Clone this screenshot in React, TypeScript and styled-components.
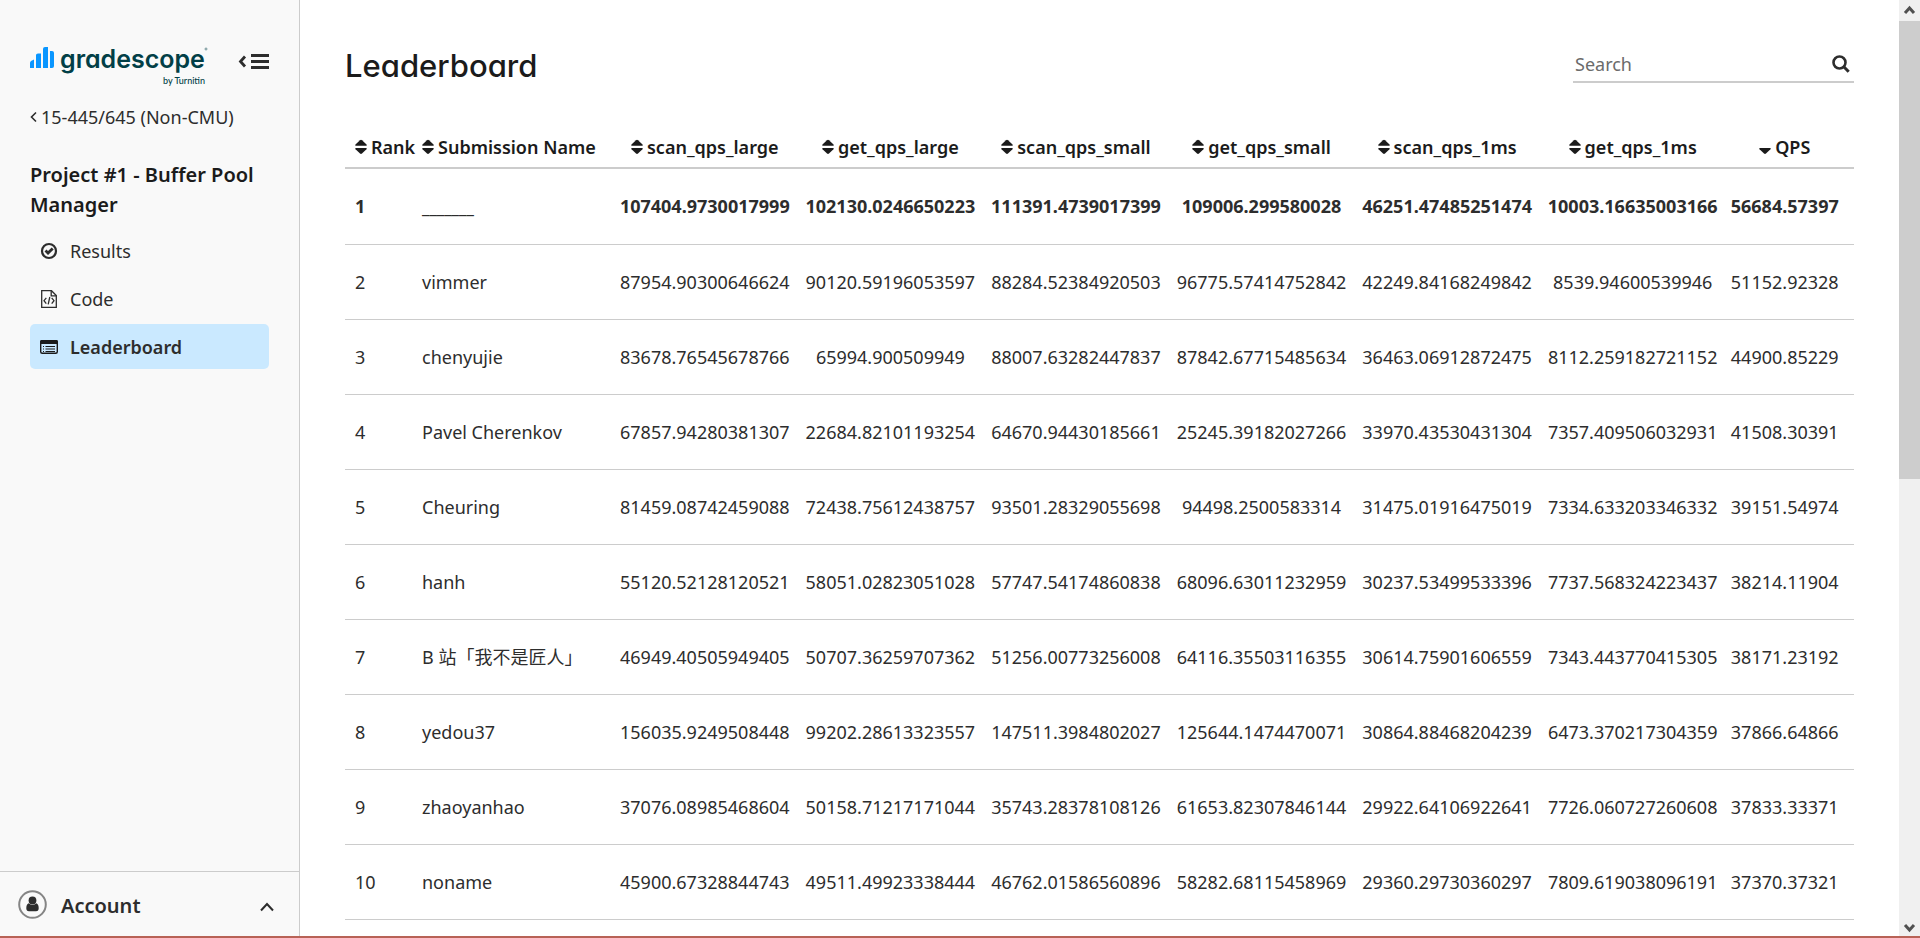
import React from 'react';
import styled, { createGlobalStyle, css } from 'styled-components';

const GlobalStyle = createGlobalStyle`
  *, *::before, *::after { box-sizing: border-box; }
  body {
    margin: 0;
    background: #fff;
    color: #2d2d2d;
    font-family: 'Noto Sans', 'Noto Sans CJK SC', sans-serif;
    font-size: 18px;
    line-height: 30px;
  }
  a { color: inherit; text-decoration: none; }
  button { font: inherit; color: inherit; background: none; border: 0; padding: 0; cursor: pointer; }
  svg { flex-shrink: 0; }
`;

const Window = styled.div`
  display: flex;
  flex-direction: column;
  height: 100vh;
  overflow: hidden;
  border-bottom: 2px solid #b86256;
`;

const Shell = styled.div`
  flex: 1;
  min-height: 0;
  display: grid;
  grid-template-columns: 300px minmax(0, 1fr) 21px;
`;

const Sidebar = styled.aside`
  display: flex;
  flex-direction: column;
  min-height: 0;
  background: #f9f9f9;
  border-right: 1px solid #ccc;
`;

const SidebarBody = styled.div`
  flex: 1;
  padding: 46px 30px 0;
`;

const Brand = styled.div`
  display: flex;
  justify-content: space-between;
  align-items: flex-start;
  height: 56px;
`;

const BrandLogo = styled.svg`
  display: block;
  width: 190px;
  height: 42px;
  overflow: visible;
`;

const CollapseButton = styled.button`
  display: flex;
  margin-top: 6px;
`;

const CourseLink = styled.a`
  display: flex;
  align-items: center;
  gap: 4px;
`;

const AssignmentTitle = styled.h2`
  margin: 28px 0 8px;
  color: #1b1b1b;
  font-size: 20px;
  font-weight: 600;
`;

const NavList = styled.ul`
  list-style: none;
  margin: 0;
  padding: 0;
  display: grid;
  gap: 3px;
`;

const NavLink = styled.a<{ $active?: boolean }>`
  display: flex;
  align-items: center;
  gap: 11px;
  height: 45px;
  padding-left: 9px;
  border-radius: 5px;
  ${(p) => p.$active && css`
    background: #cae9ff;
    font-weight: 600;
  `}
`;

const AccountButton = styled.button`
  display: flex;
  align-items: center;
  gap: 14px;
  height: 65px;
  padding: 0 25px 0 18px;
  border-top: 1px solid #ccc;
  font-size: 20px;
  font-weight: 600;
  text-align: left;
`;

const AccountLabel = styled.span`
  flex: 1;
  padding-top: 4px;
`;

const AccountChevron = styled.svg`
  margin-top: 6px;
`;

const Main = styled.main`
  min-width: 0;
  overflow: hidden;
  padding: 45px 45px 0;
`;

const PageHeader = styled.header`
  display: flex;
  justify-content: space-between;
  align-items: flex-start;
`;

const PageTitle = styled.h1`
  margin: 0;
  color: #1b1b1b;
  font-family: Inter, sans-serif;
  font-feature-settings: 'cv11';
  font-size: 31px;
  font-weight: 500;
  line-height: 42px;
`;

const SearchBox = styled.form`
  display: flex;
  align-items: center;
  width: 281px;
  height: 38px;
  padding: 2px 4px 0 0;
  border-bottom: 2px solid #ccc;
`;

const SearchInput = styled.input`
  flex: 1;
  min-width: 0;
  padding: 0 2px;
  border: 0;
  outline: 0;
  background: none;
  font: inherit;
  color: inherit;
  &::placeholder { color: #6b6b6b; opacity: 1; }
`;

const Board = styled.table`
  width: 100%;
  margin-top: 40px;
  border-collapse: collapse;
  table-layout: fixed;
`;

const HeadCell = styled.th<{ $left?: boolean }>`
  height: 41px;
  padding: 0 0 0 ${(p) => (p.$left ? 10 : 0)}px;
  border-bottom: 2px solid #ccc;
  color: #1b1b1b;
  font-weight: 600;
  white-space: nowrap;
  &:last-child { padding-right: 10px; }
`;

const SortButton = styled.button<{ $left?: boolean }>`
  display: flex;
  align-items: center;
  justify-content: ${(p) => (p.$left ? 'flex-start' : 'center')};
  gap: 4px;
  width: 100%;
`;

const Row = styled.tr<{ $leader?: boolean }>`
  height: ${(p) => (p.$leader ? 76 : 75)}px;
  font-weight: ${(p) => (p.$leader ? 700 : 400)};
`;

const Cell = styled.td<{ $left?: boolean }>`
  padding: 0 0 0 ${(p) => (p.$left ? 10 : 0)}px;
  border-bottom: 1px solid #ccc;
  text-align: ${(p) => (p.$left ? 'left' : 'center')};
  white-space: nowrap;
  &:last-child { padding-right: 10px; }
`;

const ScrollTrack = styled.div`
  display: flex;
  flex-direction: column;
  align-items: stretch;
  background: #f0f0f0;
`;

const ScrollArrow = styled.svg`
  display: block;
  width: 21px;
  height: 21px;
`;

const ScrollRail = styled.div`
  flex: 1;
`;

const ScrollThumb = styled.div`
  height: 51.2%;
  background: #cdcdcd;
`;

const columns = [
  { label: 'Rank', width: '67px' },
  { label: 'Submission Name', width: '200px' },
  { label: 'scan_qps_large', width: '13%' },
  { label: 'get_qps_large', width: '13%' },
  { label: 'scan_qps_small', width: '13%' },
  { label: 'get_qps_small', width: '13%' },
  { label: 'scan_qps_1ms', width: '13%' },
  { label: 'get_qps_1ms', width: '13%' },
  { label: 'QPS', width: '9%' },
];

const rows = [
  ['1', '_______', '107404.9730017999', '102130.0246650223', '111391.4739017399', '109006.299580028', '46251.47485251474', '10003.16635003166', '56684.57397'],
  ['2', 'vimmer', '87954.90300646624', '90120.59196053597', '88284.52384920503', '96775.57414752842', '42249.84168249842', '8539.94600539946', '51152.92328'],
  ['3', 'chenyujie', '83678.76545678766', '65994.900509949', '88007.63282447837', '87842.67715485634', '36463.06912872475', '8112.259182721152', '44900.85229'],
  ['4', 'Pavel Cherenkov', '67857.94280381307', '22684.82101193254', '64670.94430185661', '25245.39182027266', '33970.43530431304', '7357.409506032931', '41508.30391'],
  ['5', 'Cheuring', '81459.08742459088', '72438.75612438757', '93501.28329055698', '94498.2500583314', '31475.01916475019', '7334.633203346332', '39151.54974'],
  ['6', 'hanh', '55120.52128120521', '58051.02823051028', '57747.54174860838', '68096.63011232959', '30237.53499533396', '7737.568324223437', '38214.11904'],
  ['7', 'B 站「我不是匠人」', '46949.40505949405', '50707.36259707362', '51256.00773256008', '64116.35503116355', '30614.75901606559', '7343.443770415305', '38171.23192'],
  ['8', 'yedou37', '156035.9249508448', '99202.28613323557', '147511.3984802027', '125644.1474470071', '30864.88468204239', '6473.370217304359', '37866.64866'],
  ['9', 'zhaoyanhao', '37076.08985468604', '50158.71217171044', '35743.28378108126', '61653.82307846144', '29922.64106922641', '7726.060727260608', '37833.33371'],
  ['10', 'noname', '45900.67328844743', '49511.49923338444', '46762.01586560896', '58282.68115458969', '29360.29730360297', '7809.619038096191', '37370.37321'],
];

const LogoText = styled.text`
  font-family: Inter, sans-serif;
  font-feature-settings: 'cv11';
  font-size: 25px;
  font-weight: 600;
`;

const LogoByline = styled.text`
  font-family: Lato, sans-serif;
  font-size: 9px;
  font-weight: 500;
`;

const GradescopeLogo = () => (
  <BrandLogo viewBox="0 0 190 42" role="img" aria-label="Gradescope by Turnitin">
    <g fill="#0a96ff">
      <path d="M0 22V17Q0 16 1 15L4 13.500V22Z" />
      <path d="M6 22V9Q6 7.500 8 7.500H11V22Z" />
      <path d="M13 22V3Q13 1 15 1H18V22Z" />
      <path d="M20 5H22Q24 5 24 7V20Q24 22 22 22H20Z" />
    </g>
    <g fill="#023f47">
      <LogoText x="30" y="22">gradescope</LogoText>
      <LogoByline x="133" y="38">by Turnitin</LogoByline>
    </g>
    <circle cx="176" cy="3" r="1" fill="none" stroke="#6d9095" />
  </BrandLogo>
);

const CollapseIcon = () => (
  <svg width="31" height="18" viewBox="0 0 31 18" aria-hidden="true">
    <path d="M7 4.500L2.500 9.500L7 14.500" fill="none" stroke="#2d2d2d" strokeWidth="2.800" />
    <path d="M13 3.500H31M13 9.500H31M13 15.500H31" stroke="#2d2d2d" strokeWidth="3" />
  </svg>
);

const BackIcon = () => (
  <svg width="7" height="12" viewBox="0 0 7 12" aria-hidden="true">
    <path d="M6 1.500L1.500 6L6 10.500" fill="none" stroke="#2d2d2d" strokeWidth="1.600" />
  </svg>
);

const ResultsIcon = () => (
  <svg width="20" height="20" viewBox="0 0 20 20" aria-hidden="true">
    <circle cx="10" cy="10" r="7" fill="none" stroke="#2d2d2d" strokeWidth="2.200" />
    <path d="M6.500 9.600L9 12.100L13.700 7.400" fill="none" stroke="#2d2d2d" strokeWidth="2.800" />
  </svg>
);

const CodeIcon = () => (
  <svg width="20" height="20" viewBox="0 0 20 20" fill="none" stroke="#2d2d2d" strokeWidth="1.300" aria-hidden="true">
    <path d="M2.700 1.700H12.500L17.300 6.500V18.300H2.700Z" />
    <path d="M12.200 1.700V6.800H17.300" />
    <path d="M7.300 8.800L5 11.700L7.300 14.600M12.700 8.800L15 11.700L12.700 14.600M10.800 8L9.200 15.400" />
  </svg>
);

const BoardIcon = () => (
  <svg width="20" height="20" viewBox="0 0 20 20" aria-hidden="true">
    <rect x="1.700" y="3.700" width="16.600" height="12.600" rx="1.500" fill="none" stroke="#1b1b1b" strokeWidth="1.400" />
    <path d="M1 7V4.500Q1 3 2.500 3H17.500Q19 3 19 4.500V7Z" fill="#1b1b1b" />
    <path d="M4 9.500H5M6.500 9.500H16M4 12H5M6.500 12H16M4 14.500H5M6.500 14.500H16" stroke="#1b1b1b" strokeWidth="1.200" />
  </svg>
);

const UserIcon = () => (
  <svg width="29" height="29" viewBox="0 0 29 29" aria-hidden="true">
    <circle cx="14.500" cy="14.500" r="13.300" fill="none" stroke="#858585" strokeWidth="2" />
    <circle cx="14.500" cy="10.500" r="3.900" fill="#2d2d2d" />
    <path d="M10.600 13.300Q8.300 14.200 8.300 18.300Q8.300 21.300 11 21.300H18Q20.700 21.300 20.700 18.300Q20.700 14.200 18.400 13.300Q14.500 16.700 10.600 13.300Z" fill="#2d2d2d" />
  </svg>
);

const ChevronUpIcon = () => (
  <AccountChevron width="14" height="10" viewBox="0 0 14 10" aria-hidden="true">
    <path d="M1 8.500L7 2L13 8.500" fill="none" stroke="#2d2d2d" strokeWidth="2" />
  </AccountChevron>
);

const SearchIcon = () => (
  <svg width="18" height="18" viewBox="0 0 18 18" fill="none" stroke="#2d2d2d" aria-hidden="true">
    <circle cx="7.500" cy="7.500" r="6" strokeWidth="2.600" />
    <path d="M11.800 11.800L16.700 16.700" strokeWidth="3" />
  </svg>
);

const SortIcon = ({ descending }: { descending: boolean }) => (
  <svg width="12" height="16" viewBox="0 0 12 16" fill="#1b1b1b" aria-hidden="true">
    {!descending && <path d="M1 6.800Q-0.500 6.800 0.500 5.600L5 1.200Q6 0.300 7 1.200L11.500 5.600Q12.500 6.800 11 6.800Z" />}
    <path d="M1 9Q-0.500 9 0.500 10.200L5 14.600Q6 15.500 7 14.600L11.500 10.200Q12.500 9 11 9Z" />
  </svg>
);

const App = () => (
  <>
    <GlobalStyle />
    <Window>
      <Shell>
        <Sidebar>
          <SidebarBody>
            <Brand>
              <a href="#home"><GradescopeLogo /></a>
              <CollapseButton type="button" aria-label="Collapse menu"><CollapseIcon /></CollapseButton>
            </Brand>
            <CourseLink href="#course"><BackIcon />15-445/645 (Non-CMU)</CourseLink>
            <AssignmentTitle>Project #1 - Buffer Pool Manager</AssignmentTitle>
            <nav>
              <NavList>
                <li><NavLink href="#results"><ResultsIcon />Results</NavLink></li>
                <li><NavLink href="#code"><CodeIcon />Code</NavLink></li>
                <li><NavLink href="#leaderboard" $active><BoardIcon />Leaderboard</NavLink></li>
              </NavList>
            </nav>
          </SidebarBody>
          <AccountButton type="button"><UserIcon /><AccountLabel>Account</AccountLabel><ChevronUpIcon /></AccountButton>
        </Sidebar>
        <Main>
          <PageHeader>
            <PageTitle>Leaderboard</PageTitle>
            <SearchBox role="search">
              <SearchInput type="text" placeholder="Search" aria-label="Search" />
              <SearchIcon />
            </SearchBox>
          </PageHeader>
          <Board>
            <colgroup>
              {columns.map((c) => <col key={c.label} width={c.width} />)}
            </colgroup>
            <thead>
              <tr>
                {columns.map((c, i) => (
                  <HeadCell key={c.label} $left={i < 2} scope="col">
                    <SortButton type="button" $left={i < 2}>
                      <SortIcon descending={c.label === 'QPS'} />{c.label}
                    </SortButton>
                  </HeadCell>
                ))}
              </tr>
            </thead>
            <tbody>
              {rows.map((r, n) => (
                <Row key={r[0]} $leader={n === 0}>
                  {r.map((value, i) => <Cell key={i} $left={i < 2}>{value}</Cell>)}
                </Row>
              ))}
            </tbody>
          </Board>
        </Main>
        <ScrollTrack aria-hidden="true">
          <ScrollArrow viewBox="0 0 21 21"><path d="M6 13L10.500 8L15 13" fill="none" stroke="#505050" strokeWidth="3" /></ScrollArrow>
          <ScrollRail><ScrollThumb /></ScrollRail>
          <ScrollArrow viewBox="0 0 21 21"><path d="M6 10L10.500 15L15 10" fill="none" stroke="#505050" strokeWidth="3" /></ScrollArrow>
        </ScrollTrack>
      </Shell>
    </Window>
  </>
);

export default App;
